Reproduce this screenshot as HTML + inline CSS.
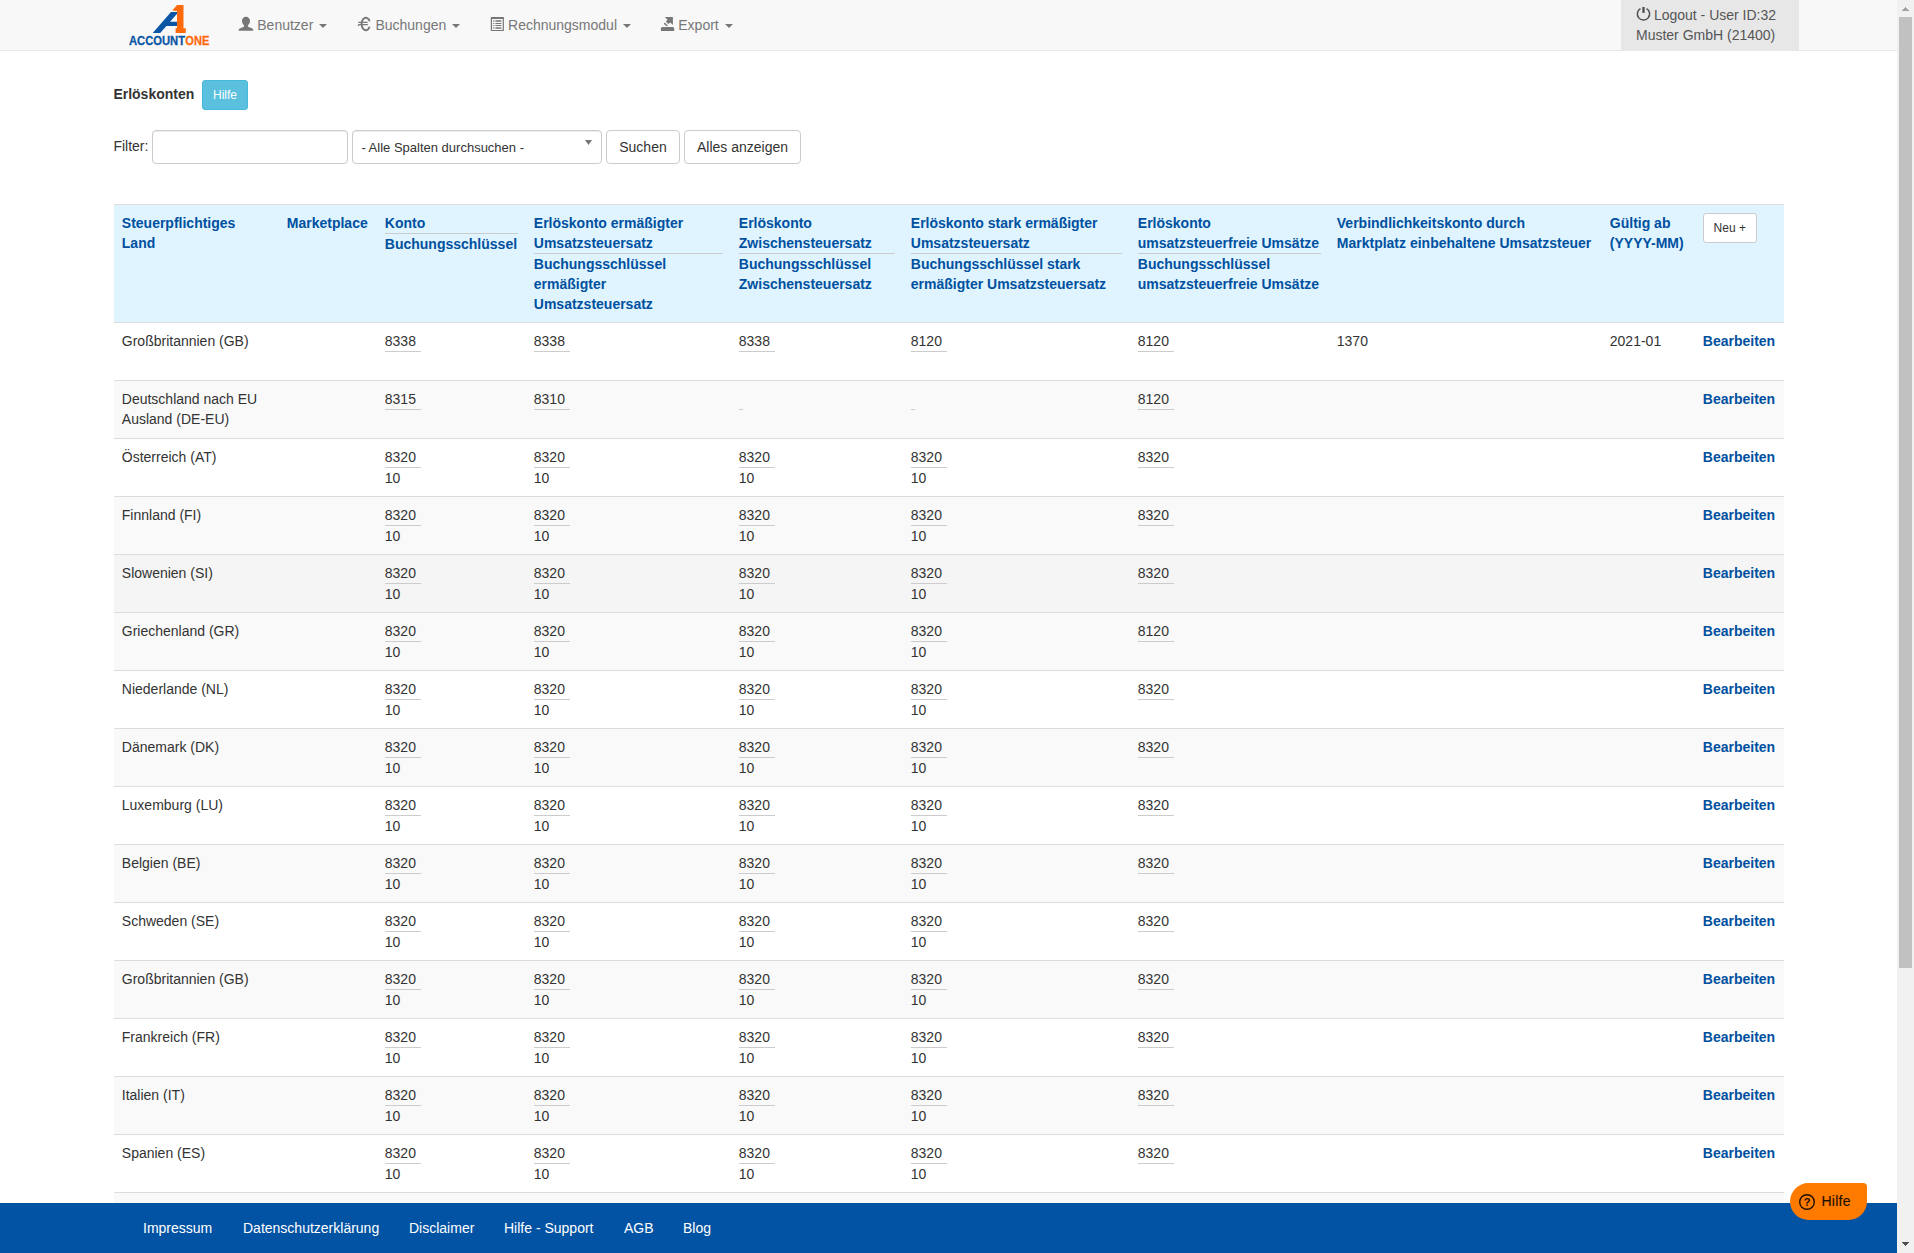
<!DOCTYPE html>
<html lang="de">
<head>
<meta charset="utf-8">
<title>Erlöskonten</title>
<style>
*{box-sizing:border-box}
html,body{margin:0;padding:0}
body{width:1914px;height:1253px;overflow:hidden;position:relative;background:#fff;
 font-family:"Liberation Sans",Arial,Helvetica,sans-serif;font-size:14px;line-height:20px;color:#333}
a{text-decoration:none;color:inherit}
/* ---------- navbar ---------- */
#nav{position:absolute;left:0;top:0;width:1897px;height:51px;background:#f8f8f8;border-bottom:1px solid #e7e7e7}
#logo{position:absolute;left:120px;top:0;width:100px;height:50px}
#menu{position:absolute;left:224.4px;top:0;height:50px;margin:0;padding:0;list-style:none;white-space:nowrap}
#menu li{float:left;height:50px;padding:15px 15px;color:#777;position:relative}
#menu li svg{display:inline-block;vertical-align:top;margin-top:2px;margin-right:0;overflow:visible}
.caret{display:inline-block;width:0;height:0;margin-left:2px;vertical-align:middle;border-top:4px solid #777;border-right:4px solid transparent;border-left:4px solid transparent}
#logout{position:absolute;left:1621px;top:0;width:178px;height:51px;background:#e7e7e7;color:#555;padding:5px 15px}
#logout svg{vertical-align:top;margin-top:2px;overflow:visible}
/* ---------- heading / filter ---------- */
#title{position:absolute;left:113.4px;top:84px;font-weight:bold;white-space:nowrap}
#hbtn{position:absolute;left:202px;top:80px;width:46px;height:30px;background:#5bc0de;border:1px solid #46b8da;border-radius:3px;color:#fff;font-size:12px;line-height:18px;padding:5px 0;text-align:center}
#flabel{position:absolute;left:113.4px;top:136px}
#finput{position:absolute;left:152px;top:130px;width:196px;height:34px;border:1px solid #ccc;border-radius:4px;background:#fff;box-shadow:inset 0 1px 1px rgba(0,0,0,.075)}
#fsel{position:absolute;left:352px;top:130px;width:250px;height:34px;border:1px solid #ccc;border-radius:4px;background:#fff;box-shadow:inset 0 1px 1px rgba(0,0,0,.075);font-size:13px;line-height:20px;padding:7px 0 0 8.4px;color:#333}
#fsel svg{position:absolute;left:232px;top:9px}
.btn{position:absolute;top:130px;height:34px;border:1px solid #ccc;border-radius:4px;background:#fff;color:#333;text-align:center;padding:6px 0;line-height:20px}
/* ---------- table ---------- */
#tbl{position:absolute;left:113.8px;top:204px;width:1670px;border-collapse:collapse;border-spacing:0;table-layout:fixed}
#tbl th{background:#dff4ff;color:#0050a0;font-weight:bold;text-align:left;vertical-align:top;padding:8px;border-top:1px solid #ddd;border-bottom:1px solid #ddd;height:118px;line-height:20px}
#tbl th .l1{border-bottom:1px solid #ccc;display:block}
#tbl th .l2{display:block}
#tbl td{padding:8px;vertical-align:top;border-top:1px solid #ddd;height:58px;line-height:20px}
#tbl tr.s td{background:#f9f9f9}
#tbl tr.h td{background:#f5f5f5}
#tbl td .a{height:21px;white-space:nowrap}
#tbl td .a span{display:inline-block;height:21px;line-height:20px;border-bottom:1px solid #ccc;padding-right:5px;vertical-align:top}
#tbl td .a span.e{padding-right:0;width:4px;overflow:hidden}
#tbl td .b{height:20px}
.ed{font-weight:bold;color:#0050a0}
#neu{display:inline-block;width:54px;height:30px;border:1px solid #ccc;border-radius:3px;background:#fff;color:#333;font-size:12px;line-height:18px;padding:5px 0;text-align:center;font-weight:normal;vertical-align:top}
/* ---------- footer ---------- */
#foot{position:absolute;left:0;top:1203px;width:1897px;height:50px;background:#0353a4;color:#fff;white-space:nowrap}
#foot a{position:absolute;top:15px;color:#fff}
/* ---------- help widget ---------- */
#help{position:absolute;left:1790px;top:1183px;width:77px;height:37px;background:#ff7b00;border-radius:19px 4px 19px 19px;color:#1c0f00}
#help span{position:absolute;left:31.5px;top:8px;font-size:14px;line-height:20px;letter-spacing:.25px;-webkit-text-stroke:.15px #1c0f00}
#help svg{position:absolute;left:8px;top:10px}
/* ---------- scrollbar ---------- */
#sb{position:absolute;left:1897px;top:0;width:17px;height:1253px;background:#f1f1f1}
#sb .th{position:absolute;left:2px;top:17px;width:13px;height:951px;background:#c1c1c1}
#sb svg{position:absolute;left:0;top:0}
</style>
</head>
<body>

<div id="nav">
 <svg id="logo" viewBox="120 0 100 50">
  <polygon fill="#0a56a5" points="152.7,33 160.2,33 166.4,25.9 177.5,25.9 177.5,21.8 170,21.8 177.5,13.2 177.5,12 171,12"/>
  <polygon fill="#ff6a0d" points="177,5 183.5,5 183.5,28.2 185.8,28.2 185.8,33 175.6,33 175.6,28.2 177,28.2 177,11 172.2,10.6"/>
  <text x="129" y="45" font-family="Liberation Sans, Arial, sans-serif" font-weight="bold" font-size="12.4" textLength="56" lengthAdjust="spacingAndGlyphs" fill="#0a56a5" stroke="#0a56a5" stroke-width=".3">ACCOUNT</text>
  <text x="185.3" y="45" font-family="Liberation Sans, Arial, sans-serif" font-weight="bold" font-size="12.4" textLength="24" lengthAdjust="spacingAndGlyphs" fill="#ff6a0d" stroke="#ff6a0d" stroke-width=".3">ONE</text>
 </svg>
 <ul id="menu">
  <li><svg width="14" height="14" viewBox="0 0 14 14"><path fill="#777" d="M7 -0.2C9.300 -0.2 11 1.700 11 4.100C11 5.900 10.100 7.500 8.900 8.200L8.900 9.200C8.900 9.600 9.200 9.900 9.700 10.100L12.700 11.200C13.700 11.600 14.300 12.200 14.300 13.200L14.300 13.800L-0.3 13.800L-0.3 13.200C-0.3 12.200 0.3 11.600 1.300 11.200L4.300 10.100C4.800 9.900 5.100 9.600 5.100 9.200L5.100 8.200C3.900 7.500 3 5.900 3 4.100C3 1.700 4.700 -0.2 7 -0.2Z"/></svg> Benutzer <b class="caret"></b></li>
  <li><svg width="14" height="14" viewBox="0 0 14 14" style="margin-right:.3px"><path fill="none" stroke="#777" stroke-width="1.900" d="M12.700 4.200A4.300 6.200 0 1 0 12.700 9.800"/><path fill="none" stroke="#777" stroke-width="1.250" d="M1.300 5.400H10.600M1.500 7.500H10.800M1 8.800L2.300 7.500"/></svg> Buchungen <b class="caret"></b></li>
  <li><svg width="14" height="14" viewBox="-0.2 0 14 14"><path fill="#777" fill-rule="evenodd" d="M0.600 0.100H13.700V14H0.600ZM1.800 2V13H12.500V2ZM3 3.300H4.100V4.700H3ZM5.200 3.300H11.200V4.700H5.200ZM3 6H4.100V7H3ZM5.200 6H11.200V7H5.200ZM3 8H4.100V9H3ZM5.200 8H11.200V9H5.200ZM3 10.300H4.100V11.700H3ZM5.200 10.300H11.200V11.700H5.200Z"/></svg> Rechnungsmodul <b class="caret"></b></li>
  <li><svg width="14" height="14" viewBox="-0.9 0 14 14" style="margin-right:-.5px"><path fill="#777" d="M2.900 0H11V7.900L8.300 5.400L6.400 7.100L3.900 4.400L5.700 2.700ZM-1 13.900V11.200L0 10.050H11.300L12.300 11.200V13.900Z"/><path fill="none" stroke="#777" stroke-width="1.500" stroke-linecap="round" d="M2.800 6.600L5 8.500"/></svg> Export <b class="caret"></b></li>
 </ul>
 <div id="logout"><svg width="14" height="14" viewBox="0 0 14 14"><path fill="none" stroke="#4d4d4d" stroke-width="1.500" d="M4.450 1.600A6.150 6.150 0 1 0 10.550 1.600"/><path fill="none" stroke="#4d4d4d" stroke-width="2.300" d="M7.500 0V5.900"/></svg> Logout - User ID:32<br>Muster GmbH (21400)</div>
</div>

<div id="title">Erlöskonten</div>
<a id="hbtn">Hilfe</a>

<div id="flabel">Filter:</div>
<div id="finput"></div>
<div id="fsel">- Alle Spalten durchsuchen -<svg width="7" height="5" viewBox="0 0 7 5"><polygon points="0,0 7,0 3.5,5" fill="#767676"/></svg></div>
<a class="btn" style="left:606px;width:74px">Suchen</a>
<a class="btn" style="left:684px;width:117px">Alles anzeigen</a>

<table id="tbl">
 <colgroup><col style="width:165px"><col style="width:98px"><col style="width:149px"><col style="width:205px"><col style="width:172px"><col style="width:227px"><col style="width:199px"><col style="width:273px"><col style="width:93px"><col style="width:89px"></colgroup>
 <thead><tr>
  <th>Steuerpflichtiges Land</th>
  <th>Marketplace</th>
  <th><span class="l1">Konto</span><span class="l2">Buchungsschlüssel</span></th>
  <th><span class="l1">Erlöskonto ermäßigter Umsatzsteuersatz</span><span class="l2">Buchungsschlüssel ermäßigter Umsatzsteuersatz</span></th>
  <th><span class="l1">Erlöskonto Zwischensteuersatz</span><span class="l2">Buchungsschlüssel Zwischensteuersatz</span></th>
  <th><span class="l1">Erlöskonto stark ermäßigter Umsatzsteuersatz</span><span class="l2">Buchungsschlüssel stark ermäßigter Umsatzsteuersatz</span></th>
  <th><span class="l1">Erlöskonto umsatzsteuerfreie Umsätze</span><span class="l2">Buchungsschlüssel umsatzsteuerfreie Umsätze</span></th>
  <th>Verbindlichkeitskonto durch Marktplatz einbehaltene Umsatzsteuer</th>
  <th>Gültig ab (YYYY-MM)</th>
  <th><a id="neu">Neu +</a></th>
 </tr></thead>
 <tbody>
<tr class=""><td>Großbritannien (GB)</td><td></td><td><div class="a"><span>8338</span></div><div class="b">&nbsp;</div></td><td><div class="a"><span>8338</span></div><div class="b">&nbsp;</div></td><td><div class="a"><span>8338</span></div><div class="b">&nbsp;</div></td><td><div class="a"><span>8120</span></div><div class="b">&nbsp;</div></td><td><div class="a"><span>8120</span></div><div class="b">&nbsp;</div></td><td>1370</td><td>2021-01</td><td><a class="ed">Bearbeiten</a></td></tr>
<tr class="s"><td>Deutschland nach EU<br>Ausland (DE-EU)</td><td></td><td><div class="a"><span>8315</span></div><div class="b">&nbsp;</div></td><td><div class="a"><span>8310</span></div><div class="b">&nbsp;</div></td><td><div class="a"><span class="e">&nbsp;</span></div><div class="b">&nbsp;</div></td><td><div class="a"><span class="e">&nbsp;</span></div><div class="b">&nbsp;</div></td><td><div class="a"><span>8120</span></div><div class="b">&nbsp;</div></td><td></td><td></td><td><a class="ed">Bearbeiten</a></td></tr>
<tr class=""><td>Österreich (AT)</td><td></td><td><div class="a"><span>8320</span></div><div class="b">10</div></td><td><div class="a"><span>8320</span></div><div class="b">10</div></td><td><div class="a"><span>8320</span></div><div class="b">10</div></td><td><div class="a"><span>8320</span></div><div class="b">10</div></td><td><div class="a"><span>8320</span></div><div class="b">&nbsp;</div></td><td></td><td></td><td><a class="ed">Bearbeiten</a></td></tr>
<tr class="s"><td>Finnland (FI)</td><td></td><td><div class="a"><span>8320</span></div><div class="b">10</div></td><td><div class="a"><span>8320</span></div><div class="b">10</div></td><td><div class="a"><span>8320</span></div><div class="b">10</div></td><td><div class="a"><span>8320</span></div><div class="b">10</div></td><td><div class="a"><span>8320</span></div><div class="b">&nbsp;</div></td><td></td><td></td><td><a class="ed">Bearbeiten</a></td></tr>
<tr class="h"><td>Slowenien (SI)</td><td></td><td><div class="a"><span>8320</span></div><div class="b">10</div></td><td><div class="a"><span>8320</span></div><div class="b">10</div></td><td><div class="a"><span>8320</span></div><div class="b">10</div></td><td><div class="a"><span>8320</span></div><div class="b">10</div></td><td><div class="a"><span>8320</span></div><div class="b">&nbsp;</div></td><td></td><td></td><td><a class="ed">Bearbeiten</a></td></tr>
<tr class="s"><td>Griechenland (GR)</td><td></td><td><div class="a"><span>8320</span></div><div class="b">10</div></td><td><div class="a"><span>8320</span></div><div class="b">10</div></td><td><div class="a"><span>8320</span></div><div class="b">10</div></td><td><div class="a"><span>8320</span></div><div class="b">10</div></td><td><div class="a"><span>8120</span></div><div class="b">&nbsp;</div></td><td></td><td></td><td><a class="ed">Bearbeiten</a></td></tr>
<tr class=""><td>Niederlande (NL)</td><td></td><td><div class="a"><span>8320</span></div><div class="b">10</div></td><td><div class="a"><span>8320</span></div><div class="b">10</div></td><td><div class="a"><span>8320</span></div><div class="b">10</div></td><td><div class="a"><span>8320</span></div><div class="b">10</div></td><td><div class="a"><span>8320</span></div><div class="b">&nbsp;</div></td><td></td><td></td><td><a class="ed">Bearbeiten</a></td></tr>
<tr class="s"><td>Dänemark (DK)</td><td></td><td><div class="a"><span>8320</span></div><div class="b">10</div></td><td><div class="a"><span>8320</span></div><div class="b">10</div></td><td><div class="a"><span>8320</span></div><div class="b">10</div></td><td><div class="a"><span>8320</span></div><div class="b">10</div></td><td><div class="a"><span>8320</span></div><div class="b">&nbsp;</div></td><td></td><td></td><td><a class="ed">Bearbeiten</a></td></tr>
<tr class=""><td>Luxemburg (LU)</td><td></td><td><div class="a"><span>8320</span></div><div class="b">10</div></td><td><div class="a"><span>8320</span></div><div class="b">10</div></td><td><div class="a"><span>8320</span></div><div class="b">10</div></td><td><div class="a"><span>8320</span></div><div class="b">10</div></td><td><div class="a"><span>8320</span></div><div class="b">&nbsp;</div></td><td></td><td></td><td><a class="ed">Bearbeiten</a></td></tr>
<tr class="s"><td>Belgien (BE)</td><td></td><td><div class="a"><span>8320</span></div><div class="b">10</div></td><td><div class="a"><span>8320</span></div><div class="b">10</div></td><td><div class="a"><span>8320</span></div><div class="b">10</div></td><td><div class="a"><span>8320</span></div><div class="b">10</div></td><td><div class="a"><span>8320</span></div><div class="b">&nbsp;</div></td><td></td><td></td><td><a class="ed">Bearbeiten</a></td></tr>
<tr class=""><td>Schweden (SE)</td><td></td><td><div class="a"><span>8320</span></div><div class="b">10</div></td><td><div class="a"><span>8320</span></div><div class="b">10</div></td><td><div class="a"><span>8320</span></div><div class="b">10</div></td><td><div class="a"><span>8320</span></div><div class="b">10</div></td><td><div class="a"><span>8320</span></div><div class="b">&nbsp;</div></td><td></td><td></td><td><a class="ed">Bearbeiten</a></td></tr>
<tr class="s"><td>Großbritannien (GB)</td><td></td><td><div class="a"><span>8320</span></div><div class="b">10</div></td><td><div class="a"><span>8320</span></div><div class="b">10</div></td><td><div class="a"><span>8320</span></div><div class="b">10</div></td><td><div class="a"><span>8320</span></div><div class="b">10</div></td><td><div class="a"><span>8320</span></div><div class="b">&nbsp;</div></td><td></td><td></td><td><a class="ed">Bearbeiten</a></td></tr>
<tr class=""><td>Frankreich (FR)</td><td></td><td><div class="a"><span>8320</span></div><div class="b">10</div></td><td><div class="a"><span>8320</span></div><div class="b">10</div></td><td><div class="a"><span>8320</span></div><div class="b">10</div></td><td><div class="a"><span>8320</span></div><div class="b">10</div></td><td><div class="a"><span>8320</span></div><div class="b">&nbsp;</div></td><td></td><td></td><td><a class="ed">Bearbeiten</a></td></tr>
<tr class="s"><td>Italien (IT)</td><td></td><td><div class="a"><span>8320</span></div><div class="b">10</div></td><td><div class="a"><span>8320</span></div><div class="b">10</div></td><td><div class="a"><span>8320</span></div><div class="b">10</div></td><td><div class="a"><span>8320</span></div><div class="b">10</div></td><td><div class="a"><span>8320</span></div><div class="b">&nbsp;</div></td><td></td><td></td><td><a class="ed">Bearbeiten</a></td></tr>
<tr class=""><td>Spanien (ES)</td><td></td><td><div class="a"><span>8320</span></div><div class="b">10</div></td><td><div class="a"><span>8320</span></div><div class="b">10</div></td><td><div class="a"><span>8320</span></div><div class="b">10</div></td><td><div class="a"><span>8320</span></div><div class="b">10</div></td><td><div class="a"><span>8320</span></div><div class="b">&nbsp;</div></td><td></td><td></td><td><a class="ed">Bearbeiten</a></td></tr>
<tr class="s"><td>Polen (PL)</td><td></td><td><div class="a"><span>8320</span></div><div class="b">10</div></td><td><div class="a"><span>8320</span></div><div class="b">10</div></td><td><div class="a"><span>8320</span></div><div class="b">10</div></td><td><div class="a"><span>8320</span></div><div class="b">10</div></td><td><div class="a"><span>8320</span></div><div class="b">&nbsp;</div></td><td></td><td></td><td><a class="ed">Bearbeiten</a></td></tr>
 </tbody>
</table>

<div id="foot">
 <a style="left:143px">Impressum</a>
 <a style="left:243px">Datenschutzerklärung</a>
 <a style="left:409px">Disclaimer</a>
 <a style="left:504px">Hilfe - Support</a>
 <a style="left:624px">AGB</a>
 <a style="left:683px">Blog</a>
</div>

<div id="help"><svg width="18" height="18" viewBox="0 0 18 18"><circle cx="9" cy="9" r="7.300" fill="none" stroke="#1c0f00" stroke-width="1.400"/><text x="9" y="13" text-anchor="middle" font-family="Liberation Sans, Arial, sans-serif" font-weight="bold" font-size="11" fill="#1c0f00">?</text></svg><span>Hilfe</span></div>

<div id="sb"><div class="th"></div><svg width="17" height="1253" viewBox="0 0 17 1253" shape-rendering="crispEdges"><g fill="#a3a3a3"><rect x="8" y="7" width="1" height="1"/><rect x="7" y="8" width="3" height="1"/><rect x="6" y="9" width="5" height="1"/><rect x="5" y="10" width="7" height="1"/></g><g fill="#505050"><rect x="5" y="1242" width="7" height="1"/><rect x="6" y="1243" width="5" height="1"/><rect x="7" y="1244" width="3" height="1"/><rect x="8" y="1245" width="1" height="1"/></g></svg></div>

</body>
</html>
